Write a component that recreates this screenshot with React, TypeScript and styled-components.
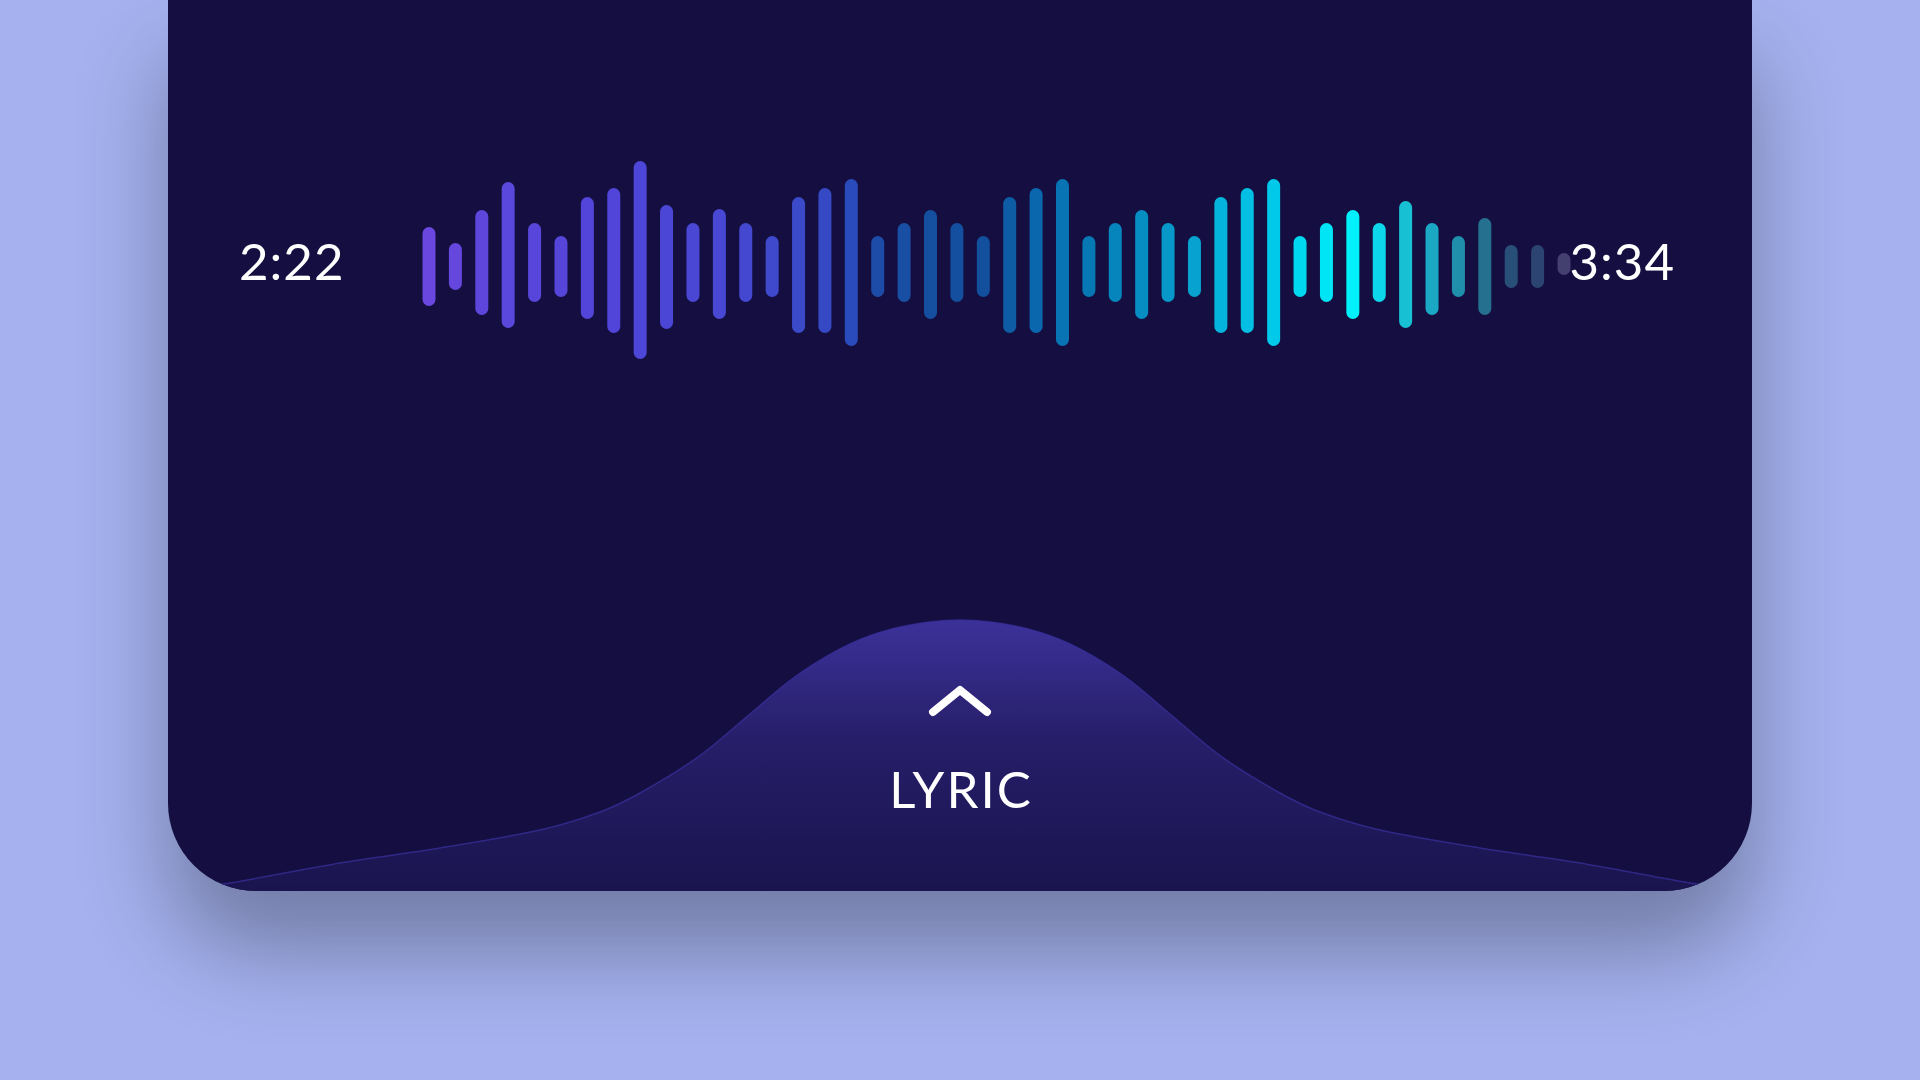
import React from "react";
import styled, { createGlobalStyle } from "styled-components";

const GlobalStyle = createGlobalStyle`
  html, body { margin: 0; padding: 0; }
  body {
    background: #a5b2ef;
    overflow: hidden;
    font-family: Lato, "Noto Sans", sans-serif;
  }
`;

const Page = styled.main`
  height: 1080px;
  padding: 0 168px;
  box-sizing: border-box;
`;

const Card = styled.section`
  height: 891px;
  background: #140f40;
  border-radius: 0 0 88px 88px;
  box-shadow: 0 60px 90px rgba(0, 0, 0, 0.3);
  overflow: hidden;
  display: flex;
  flex-direction: column;
`;

const Player = styled.div`
  display: flex;
  align-items: center;
  height: 220px;
  margin-top: 150px;
  padding-left: 71px;
`;

const Time = styled.span<{ $offset: number }>`
  margin-left: ${(p) => p.$offset}px;
  color: #ffffff;
  font-family: Lato, "Noto Sans", sans-serif;
  font-weight: 400;
  font-size: 51px;
  line-height: 51px;
  letter-spacing: 1px;
  white-space: nowrap;
`;

const Wave = styled.svg`
  flex: none;
  margin-left: 77px;
  display: block;
`;

const LyricTab = styled.div`
  position: relative;
  margin-top: auto;
  height: 291px;
  display: flex;
  flex-direction: column;
  align-items: center;
`;

const Hump = styled.svg`
  position: absolute;
  inset: 0;
  width: 100%;
  height: 100%;
  display: block;
`;

const TabButton = styled.button`
  position: relative;
  z-index: 1;
  background: none;
  border: 0;
  padding: 84px 0 0;
  display: flex;
  flex-direction: column;
  align-items: center;
  gap: 45px;
  cursor: pointer;
`;

const Label = styled.span`
  color: #ffffff;
  font-family: Lato, "Noto Sans", sans-serif;
  font-weight: 400;
  font-size: 51px;
  line-height: 51px;
  letter-spacing: 2px;
  margin-right: -2px;
`;

type Bar = [number, number, string];

const BARS: Bar[] = [
  [227, 306, "#6a48df"],
  [243, 290, "#6547dd"],
  [210, 315, "#5e46dc"],
  [182, 328, "#5a47db"],
  [223, 302, "#5846da"],
  [236, 297, "#5645d9"],
  [197, 319, "#5445da"],
  [188, 333, "#5045d8"],
  [161, 359, "#4e46d8"],
  [205, 329, "#4c46d6"],
  [223, 302, "#4a47d5"],
  [209, 319, "#4848d4"],
  [223, 302, "#4448d0"],
  [236, 297, "#3f49cc"],
  [197, 333, "#3a4ac8"],
  [188, 333, "#3549c4"],
  [179, 346, "#2a4bbb"],
  [236, 297, "#1d4ca8"],
  [223, 302, "#184ea4"],
  [210, 319, "#1550a0"],
  [223, 302, "#134f9e"],
  [236, 297, "#124f9c"],
  [197, 333, "#0e5ca4"],
  [188, 333, "#0a66ad"],
  [179, 346, "#0874b4"],
  [236, 297, "#0678b4"],
  [223, 302, "#0685bc"],
  [210, 319, "#068ec3"],
  [223, 302, "#0798c9"],
  [236, 297, "#07a2cf"],
  [197, 333, "#04b4dc"],
  [188, 333, "#02bfe3"],
  [179, 346, "#01c9ea"],
  [236, 297, "#00d8ef"],
  [223, 302, "#00e5f6"],
  [210, 319, "#00f0fc"],
  [223, 302, "#0dd7ea"],
  [201, 328, "#18c0d3"],
  [223, 315, "#1aa8c4"],
  [236, 297, "#1f8fab"],
  [218, 315, "#26708f"],
  [245, 288, "#284f78"],
  [245, 288, "#2c4471"],
  [253, 275, "#433f6e"],
];

const WAVE_X = 423;
const WAVE_Y = 150;
const WAVE_W = 1149;
const WAVE_H = 220;
const FIRST_CX = 430;
const STEP = (1565 - 430) / 43;
const BAR_W = 13;

function Waveform() {
  return (
    <Wave
      width={WAVE_W}
      height={WAVE_H}
      viewBox={`${WAVE_X} ${WAVE_Y} ${WAVE_W} ${WAVE_H}`}
    >
      {BARS.map(([top, bottom, color], i) => (
        <rect
          key={i}
          x={FIRST_CX + i * STEP - BAR_W / 2}
          y={top}
          width={BAR_W}
          height={bottom - top}
          rx={BAR_W / 2}
          fill={color}
        />
      ))}
    </Wave>
  );
}

type Pt = [number, number];

const LEFT: Pt[] = [
  [100, 903],
  [230, 883],
  [340, 863],
  [440, 848],
  [540, 830],
  [600, 812],
  [640, 793],
  [698, 757],
  [750, 714],
  [796, 676],
  [850, 644],
  [900, 627],
  [960, 620],
];

const HUMP_PTS: Pt[] = [
  ...LEFT,
  ...LEFT.slice(0, -1)
    .reverse()
    .map(([x, y]) => [1920 - x, y] as Pt),
];

function smooth(pts: Pt[]): string {
  let d = `M${pts[0][0]},${pts[0][1]}`;
  for (let i = 0; i < pts.length - 1; i++) {
    const p0 = pts[i - 1] || pts[i];
    const p1 = pts[i];
    const p2 = pts[i + 1];
    const p3 = pts[i + 2] || p2;
    const c1x = p1[0] + (p2[0] - p0[0]) / 6;
    const c1y = p1[1] + (p2[1] - p0[1]) / 6;
    const c2x = p2[0] - (p3[0] - p1[0]) / 6;
    const c2y = p2[1] - (p3[1] - p1[1]) / 6;
    d += ` C${c1x},${c1y} ${c2x},${c2y} ${p2[0]},${p2[1]}`;
  }
  return d;
}

const HUMP_EDGE = smooth(HUMP_PTS);
const HUMP_FILL = `${HUMP_EDGE} L1820,910 L100,910 Z`;

function Chevron() {
  return (
    <svg width="64" height="34" viewBox="0 0 64 34">
      <polyline
        points="5,28 32,6 59,28"
        fill="none"
        stroke="#ffffff"
        strokeWidth="8"
        strokeLinecap="round"
        strokeLinejoin="round"
      />
    </svg>
  );
}

export default function App() {
  return (
    <>
      <GlobalStyle />
      <Page>
        <Card>
          <Player>
            <Time $offset={0}>2:22</Time>
            <Waveform />
            <Time $offset={-1}>3:34</Time>
          </Player>
          <LyricTab>
            <Hump viewBox="168 600 1584 291" preserveAspectRatio="none">
              <defs>
                <linearGradient
                  id="humpFill"
                  gradientUnits="userSpaceOnUse"
                  x1="0"
                  y1="620"
                  x2="0"
                  y2="891"
                >
                  <stop offset="0" stopColor="#3c3199" />
                  <stop offset="0.45" stopColor="#261e68" />
                  <stop offset="1" stopColor="#1a144e" />
                </linearGradient>
              </defs>
              <path d={HUMP_FILL} fill="url(#humpFill)" />
              <path
                d={HUMP_EDGE}
                fill="none"
                stroke="#3a31a0"
                strokeOpacity="0.7"
                strokeWidth="1.5"
              />
            </Hump>
            <TabButton type="button">
              <Chevron />
              <Label>LYRIC</Label>
            </TabButton>
          </LyricTab>
        </Card>
      </Page>
    </>
  );
}
